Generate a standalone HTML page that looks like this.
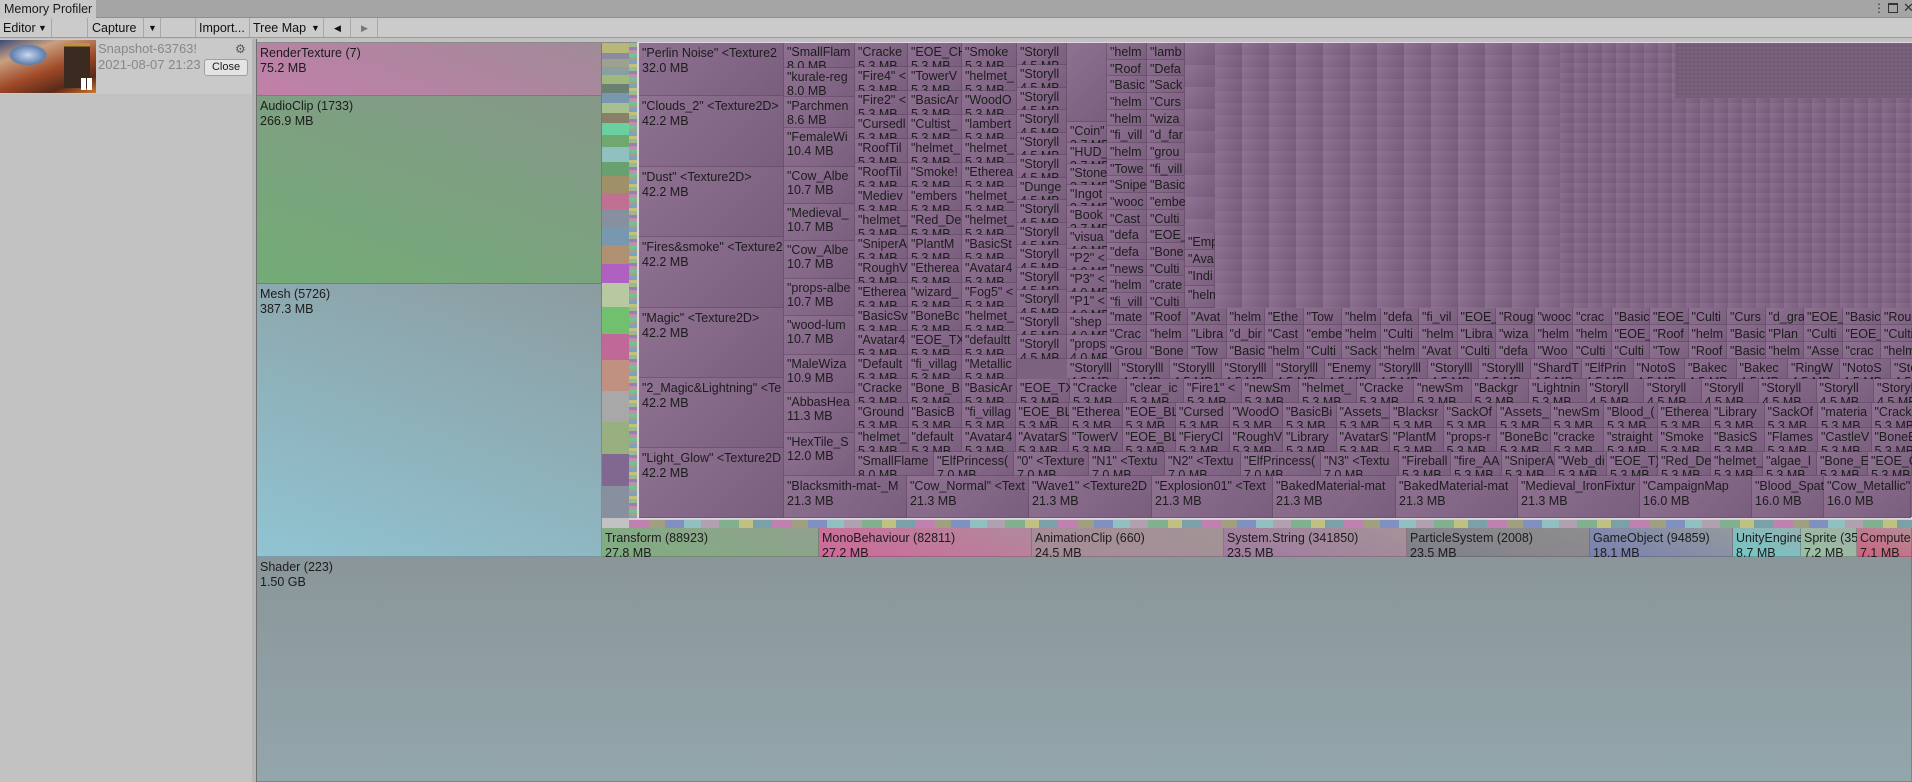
<!DOCTYPE html>
<html><head><meta charset="utf-8"><style>
*{margin:0;padding:0;box-sizing:border-box}
body{width:1912px;height:782px;overflow:hidden;background:#c2c2c2;font-family:"Liberation Sans",sans-serif;font-size:12.5px;color:#1a1a1a;position:relative}
.a{position:absolute}
.tab{left:0;top:0;width:1912px;height:18px;background:#a5a5a5;border-bottom:1px solid #8f8f8f}
.tb{left:0;top:18px;width:1912px;height:20px;background:#cbcbcb;border-bottom:1px solid #9a9a9a}
.sep{position:absolute;top:0;width:1px;height:19px;background:#a8a8a8}
.tt{position:absolute;top:3px;font-size:12.5px;color:#111}
.c{position:absolute;overflow:hidden;white-space:nowrap;padding:2px 0 0 3px;line-height:14px;font-size:12.5px;color:#1c1c1c;background:linear-gradient(135deg,#8f7292,#7a5e7e);box-shadow:inset -1px -1px 0 rgba(60,40,60,.25)}
.big{font-size:12.5px;line-height:15px;padding:3px 0 0 3px}
.strip div{position:absolute;left:0;width:27px}
</style></head><body>
<!-- tab bar -->
<div class="a tab"></div>
<div class="a" style="left:0;top:0;width:96px;height:18px;background:#c9c9c9;padding:2px 0 0 4px;font-size:12.5px">Memory Profiler</div>
<div class="a" style="left:1873px;top:1px;font-size:12px;color:#333">⋮</div>
<div class="a" style="left:1888px;top:3px;width:10px;height:10px;border:1px solid #333;border-top-width:2px"></div>
<div class="a" style="left:1903px;top:0;font-size:13px;color:#333">✕</div>
<!-- toolbar -->
<div class="a tb">
<span class="tt" style="left:3px">Editor</span><span class="tt" style="left:38px;font-size:9px;top:5px">▼</span>
<div class="sep" style="left:51px"></div><div class="sep" style="left:87px"></div>
<span class="tt" style="left:92px">Capture</span><div class="sep" style="left:143px"></div>
<span class="tt" style="left:148px;font-size:9px;top:5px">▼</span>
<div class="sep" style="left:160px"></div><div class="sep" style="left:195px"></div>
<span class="tt" style="left:199px">Import...</span><div class="sep" style="left:249px"></div>
<span class="tt" style="left:253px">Tree Map</span><span class="tt" style="left:311px;font-size:9px;top:5px">▼</span>
<div class="sep" style="left:323px"></div>
<span class="tt" style="left:334px;font-size:9px;top:5px">◀</span><div class="sep" style="left:350px"></div>
<span class="tt" style="left:361px;font-size:9px;top:5px;color:#777">▶</span><div class="sep" style="left:377px"></div>
</div>
<!-- left panel -->
<div class="a" style="left:0;top:39px;width:252px;height:55px;background:#c9c9c9"></div>
<div class="a" style="left:0;top:40px;width:96px;height:53px;background:linear-gradient(160deg,#3a4a78 0%,#c9a080 25%,#a04a28 55%,#5a2a1a 80%,#d07a30 100%)"></div>
<div class="a" style="left:8px;top:44px;width:40px;height:22px;border-radius:50%;background:radial-gradient(#c8d8f0,#6080b0 60%,transparent 70%)"></div>
<div class="a" style="left:64px;top:43px;width:26px;height:45px;background:linear-gradient(#c09040 0 8%,#3a2a20 8% 100%)"></div>
<div class="a" style="left:81px;top:78px;width:12px;height:12px;background:repeating-linear-gradient(90deg,#fff 0 5px,transparent 5px 6px)"></div>
<div class="a" style="left:98px;top:41px;color:#888;font-size:13px">Snapshot-63763!</div>
<div class="a" style="left:98px;top:57px;color:#888;font-size:13px">2021-08-07 21:23</div>
<div class="a" style="left:235px;top:42px;color:#555;font-size:12px">⚙</div>
<div class="a" style="left:204px;top:59px;width:44px;height:17px;background:#e4e4e4;border:1px solid #a0a0a0;border-radius:3px;font-size:11px;text-align:center;line-height:15px">Close</div>
<div class="a" style="left:252px;top:39px;width:4px;height:743px;background:#b5b5b5"></div>
<div class="a" style="left:256px;top:39px;width:1px;height:743px;background:#6e6e6e"></div>
<div class="a" style="left:257px;top:42px;width:1655px;height:1px;background:#8a8a8a"></div>
<!-- big categories -->
<div class="c big" style="left:257px;top:43px;width:345px;height:53px;background:linear-gradient(20deg,#c27fa9,#a08b98)">RenderTexture (7)<br>75.2 MB</div>
<div class="c big" style="left:257px;top:96px;width:345px;height:188px;background:linear-gradient(20deg,#72ac76,#869889)">AudioClip (1733)<br>266.9 MB</div>
<div class="c big" style="left:257px;top:284px;width:345px;height:273px;background:linear-gradient(20deg,#90c4d2,#8c9ca0)">Mesh (5726)<br>387.3 MB</div>
<div class="c big" style="left:257px;top:557px;width:1655px;height:225px;background:linear-gradient(180deg,#8a9699,#93a6ac)">Shader (223)<br>1.50 GB</div>
<!-- strips -->
<div class="a strip" style="left:602px;top:43px;width:27px;height:475px">
<div style="top:0;height:10px;background:#b7b77a"></div><div style="top:10px;height:6px;background:#8a8aa0"></div><div style="top:16px;height:8px;background:#a0a090"></div><div style="top:24px;height:8px;background:#8aa0a0"></div><div style="top:32px;height:9px;background:#a0b880"></div><div style="top:41px;height:9px;background:#6a8070"></div><div style="top:50px;height:10px;background:#7898b0"></div><div style="top:60px;height:10px;background:#a8c090"></div><div style="top:70px;height:10px;background:#8a8068"></div><div style="top:80px;height:12px;background:#6ad0a0"></div><div style="top:92px;height:12px;background:#70a870"></div><div style="top:104px;height:15px;background:#90c0c0"></div><div style="top:119px;height:14px;background:#68a070"></div><div style="top:133px;height:17px;background:#a09068"></div><div style="top:150px;height:16px;background:#c07090"></div><div style="top:166px;height:18px;background:#8890a0"></div><div style="top:184px;height:18px;background:#7898b0"></div><div style="top:202px;height:19px;background:#b09070"></div><div style="top:221px;height:19px;background:#b060c0"></div><div style="top:240px;height:24px;background:#b8c8a0"></div><div style="top:264px;height:27px;background:#70c070"></div><div style="top:291px;height:26px;background:#c06898"></div><div style="top:317px;height:31px;background:#c09080"></div><div style="top:348px;height:31px;background:#a8a8a8"></div><div style="top:379px;height:32px;background:#98b080"></div><div style="top:411px;height:32px;background:#806890"></div><div style="top:443px;height:32px;background:#8890a0"></div>
</div>
<div class="a" style="left:629px;top:43px;width:9px;height:475px;background:repeating-linear-gradient(180deg,#a0b890 0 4px,#9080c0 4px 7px,#c090a0 7px 10px,#70c0a0 10px 14px,#b0a070 14px 17px,#80a0c0 17px 21px,#c0c080 21px 24px)"></div>
<div class="a" style="left:629px;top:518px;width:1283px;height:10px;background:repeating-linear-gradient(90deg,#c080b0 0 20px,#a0a080 20px 36px,#8090c0 36px 55px,#90c0c0 55px 72px,#b0a0b0 72px 90px,#80b090 90px 110px,#c0c080 110px 124px,#7aa0a8 124px 143px)"></div>
<div class="a" style="left:629px;top:518px;width:1283px;height:2px;background:#d8c8d8"></div>
<!-- bottom categories -->
<div class="c big" style="left:602px;top:528px;width:217px;height:29px;background:linear-gradient(20deg,#7fae80,#92a08f)">Transform (88923)<br>27.8 MB</div>
<div class="c big" style="left:819px;top:528px;width:213px;height:29px;background:linear-gradient(20deg,#d0689a,#b08a9c)">MonoBehaviour (82811)<br>27.2 MB</div>
<div class="c big" style="left:1032px;top:528px;width:192px;height:29px;background:linear-gradient(20deg,#a88a98,#a09496)">AnimationClip (660)<br>24.5 MB</div>
<div class="c big" style="left:1224px;top:528px;width:183px;height:29px;background:linear-gradient(20deg,#a07aa0,#a59299)">System.String (341850)<br>23.5 MB</div>
<div class="c big" style="left:1407px;top:528px;width:183px;height:29px;background:linear-gradient(20deg,#7f7f88,#8e8e90)">ParticleSystem (2008)<br>23.5 MB</div>
<div class="c big" style="left:1590px;top:528px;width:143px;height:29px;background:linear-gradient(20deg,#7880b0,#949a9e)">GameObject (94859)<br>18.1 MB</div>
<div class="c big" style="left:1733px;top:528px;width:68px;height:29px;background:linear-gradient(20deg,#70c8c8,#98b0b0)">UnityEngine<br>8.7 MB</div>
<div class="c big" style="left:1801px;top:528px;width:56px;height:29px;background:linear-gradient(20deg,#98c0a0,#a0b0a8)">Sprite (35<br>7.2 MB</div>
<div class="c big" style="left:1857px;top:528px;width:55px;height:29px;background:linear-gradient(20deg,#d06080,#b09098)">Compute<br>7.1 MB</div>
<!-- texture box -->
<div class="a" style="left:637px;top:42px;width:1275px;height:477px;background:#e0d6e0"></div>
<div class="a" style="left:639px;top:43px;width:1273px;height:474px;background:#7d627f"></div>
<!-- pattern area -->
<div class="a" style="left:1215px;top:43px;width:697px;height:265px;background:linear-gradient(135deg,#917495,#765a79);background-size:27px 12px"></div>
<div class="a" style="left:1560px;top:43px;width:352px;height:265px;background:linear-gradient(135deg,#8d7090,#755a78);background-size:14px 10px"></div>
<div class="a" style="left:1675px;top:43px;width:237px;height:55px;background:linear-gradient(135deg,#7f6682,#6d5570);background-size:4px 4px"></div>
<div class="a" style="left:1185px;top:43px;width:30px;height:190px;background:linear-gradient(135deg,#917495,#765a79);background-size:30px 22px"></div>
<!-- col1 -->
<div class="c big" style="left:639px;top:43px;width:145px;height:53px">"Perlin Noise" &lt;Texture2<br>32.0 MB</div>
<div class="c big" style="left:639px;top:96px;width:145px;height:71px">"Clouds_2" &lt;Texture2D&gt;<br>42.2 MB</div>
<div class="c big" style="left:639px;top:167px;width:145px;height:70px">"Dust" &lt;Texture2D&gt;<br>42.2 MB</div>
<div class="c big" style="left:639px;top:237px;width:145px;height:71px">"Fires&amp;smoke" &lt;Texture2<br>42.2 MB</div>
<div class="c big" style="left:639px;top:308px;width:145px;height:70px">"Magic" &lt;Texture2D&gt;<br>42.2 MB</div>
<div class="c big" style="left:639px;top:378px;width:145px;height:70px">"2_Magic&amp;Lightning" &lt;Te<br>42.2 MB</div>
<div class="c big" style="left:639px;top:448px;width:145px;height:70px">"Light_Glow" &lt;Texture2D<br>42.2 MB</div>
<!-- col2 -->
<div class="c" style="left:784px;top:43px;width:71px;height:25px">"SmallFlam<br>8.0 MB</div>
<div class="c" style="left:784px;top:68px;width:71px;height:29px">"kurale-reg<br>8.0 MB</div>
<div class="c" style="left:784px;top:97px;width:71px;height:31px">"Parchmen<br>8.6 MB</div>
<div class="c" style="left:784px;top:128px;width:71px;height:39px">"FemaleWi<br>10.4 MB</div>
<div class="c" style="left:784px;top:167px;width:71px;height:37px">"Cow_Albe<br>10.7 MB</div>
<div class="c" style="left:784px;top:204px;width:71px;height:37px">"Medieval_<br>10.7 MB</div>
<div class="c" style="left:784px;top:241px;width:71px;height:38px">"Cow_Albe<br>10.7 MB</div>
<div class="c" style="left:784px;top:279px;width:71px;height:37px">"props-albe<br>10.7 MB</div>
<div class="c" style="left:784px;top:316px;width:71px;height:39px">"wood-lum<br>10.7 MB</div>
<div class="c" style="left:784px;top:355px;width:71px;height:38px">"MaleWiza<br>10.9 MB</div>
<div class="c" style="left:784px;top:393px;width:71px;height:40px">"AbbasHea<br>11.3 MB</div>
<div class="c" style="left:784px;top:433px;width:71px;height:43px">"HexTile_S<br>12.0 MB</div>
<!-- cols A B C -->
<div class="c" style="left:855px;top:43px;width:53px;height:24px">"Cracke<br>5.3 MB</div><div class="c" style="left:908px;top:43px;width:54px;height:24px">"EOE_CH<br>5.3 MB</div><div class="c" style="left:962px;top:43px;width:55px;height:24px">"Smoke<br>5.3 MB</div>
<div class="c" style="left:855px;top:67px;width:53px;height:24px">"Fire4" &lt;<br>5.3 MB</div><div class="c" style="left:908px;top:67px;width:54px;height:24px">"TowerV<br>5.3 MB</div><div class="c" style="left:962px;top:67px;width:55px;height:24px">"helmet_<br>5.3 MB</div>
<div class="c" style="left:855px;top:91px;width:53px;height:24px">"Fire2" &lt;<br>5.3 MB</div><div class="c" style="left:908px;top:91px;width:54px;height:24px">"BasicAr<br>5.3 MB</div><div class="c" style="left:962px;top:91px;width:55px;height:24px">"WoodO<br>5.3 MB</div>
<div class="c" style="left:855px;top:115px;width:53px;height:24px">"Cursedl<br>5.3 MB</div><div class="c" style="left:908px;top:115px;width:54px;height:24px">"Cultist_<br>5.3 MB</div><div class="c" style="left:962px;top:115px;width:55px;height:24px">"lambert<br>5.3 MB</div>
<div class="c" style="left:855px;top:139px;width:53px;height:24px">"RoofTil<br>5.3 MB</div><div class="c" style="left:908px;top:139px;width:54px;height:24px">"helmet_<br>5.3 MB</div><div class="c" style="left:962px;top:139px;width:55px;height:24px">"helmet_<br>5.3 MB</div>
<div class="c" style="left:855px;top:163px;width:53px;height:24px">"RoofTil<br>5.3 MB</div><div class="c" style="left:908px;top:163px;width:54px;height:24px">"Smoke!<br>5.3 MB</div><div class="c" style="left:962px;top:163px;width:55px;height:24px">"Etherea<br>5.3 MB</div>
<div class="c" style="left:855px;top:187px;width:53px;height:24px">"Mediev<br>5.3 MB</div><div class="c" style="left:908px;top:187px;width:54px;height:24px">"embers<br>5.3 MB</div><div class="c" style="left:962px;top:187px;width:55px;height:24px">"helmet_<br>5.3 MB</div>
<div class="c" style="left:855px;top:211px;width:53px;height:24px">"helmet_<br>5.3 MB</div><div class="c" style="left:908px;top:211px;width:54px;height:24px">"Red_De<br>5.3 MB</div><div class="c" style="left:962px;top:211px;width:55px;height:24px">"helmet_<br>5.3 MB</div>
<div class="c" style="left:855px;top:235px;width:53px;height:24px">"SniperA<br>5.3 MB</div><div class="c" style="left:908px;top:235px;width:54px;height:24px">"PlantM<br>5.3 MB</div><div class="c" style="left:962px;top:235px;width:55px;height:24px">"BasicSt<br>5.3 MB</div>
<div class="c" style="left:855px;top:259px;width:53px;height:24px">"RoughV<br>5.3 MB</div><div class="c" style="left:908px;top:259px;width:54px;height:24px">"Etherea<br>5.3 MB</div><div class="c" style="left:962px;top:259px;width:55px;height:24px">"Avatar4<br>5.3 MB</div>
<div class="c" style="left:855px;top:283px;width:53px;height:24px">"Etherea<br>5.3 MB</div><div class="c" style="left:908px;top:283px;width:54px;height:24px">"wizard_<br>5.3 MB</div><div class="c" style="left:962px;top:283px;width:55px;height:24px">"Fog5" &lt;<br>5.3 MB</div>
<div class="c" style="left:855px;top:307px;width:53px;height:24px">"BasicSv<br>5.3 MB</div><div class="c" style="left:908px;top:307px;width:54px;height:24px">"BoneBc<br>5.3 MB</div><div class="c" style="left:962px;top:307px;width:55px;height:24px">"helmet_<br>5.3 MB</div>
<div class="c" style="left:855px;top:331px;width:53px;height:24px">"Avatar4<br>5.3 MB</div><div class="c" style="left:908px;top:331px;width:54px;height:24px">"EOE_TX<br>5.3 MB</div><div class="c" style="left:962px;top:331px;width:55px;height:24px">"defaultt<br>5.3 MB</div>
<div class="c" style="left:855px;top:355px;width:53px;height:24px">"Default<br>5.3 MB</div><div class="c" style="left:908px;top:355px;width:54px;height:24px">"fi_villag<br>5.3 MB</div><div class="c" style="left:962px;top:355px;width:55px;height:24px">"Metallic<br>5.3 MB</div>
<!-- col D Storyll -->
<div class="c" style="left:1017px;top:43px;width:50px;height:22px">"Storyll<br>4.5 MB</div>
<div class="c" style="left:1017px;top:65px;width:50px;height:23px">"Storyll<br>4.5 MB</div>
<div class="c" style="left:1017px;top:88px;width:50px;height:22px">"Storyll<br>4.5 MB</div>
<div class="c" style="left:1017px;top:110px;width:50px;height:23px">"Storyll<br>4.5 MB</div>
<div class="c" style="left:1017px;top:133px;width:50px;height:22px">"Storyll<br>4.5 MB</div>
<div class="c" style="left:1017px;top:155px;width:50px;height:23px">"Storyll<br>4.5 MB</div>
<div class="c" style="left:1017px;top:178px;width:50px;height:22px">"Dunge<br>4.5 MB</div>
<div class="c" style="left:1017px;top:200px;width:50px;height:23px">"Storyll<br>4.5 MB</div>
<div class="c" style="left:1017px;top:223px;width:50px;height:22px">"Storyll<br>4.5 MB</div>
<div class="c" style="left:1017px;top:245px;width:50px;height:23px">"Storyll<br>4.5 MB</div>
<div class="c" style="left:1017px;top:268px;width:50px;height:22px">"Storyll<br>4.5 MB</div>
<div class="c" style="left:1017px;top:290px;width:50px;height:23px">"Storyll<br>4.5 MB</div>
<div class="c" style="left:1017px;top:313px;width:50px;height:22px">"Storyll<br>4.5 MB</div>
<div class="c" style="left:1017px;top:335px;width:50px;height:24px">"Storyll<br>4.5 MB</div>
<!-- col E -->
<div class="c" style="left:1067px;top:43px;width:40px;height:79px"></div>
<div class="c" style="left:1067px;top:122px;width:40px;height:21px">"Coin"<br>3.7 MB</div>
<div class="c" style="left:1067px;top:143px;width:40px;height:21px">"HUD_<br>3.7 MB</div>
<div class="c" style="left:1067px;top:164px;width:40px;height:21px">"Stone<br>3.7 MB</div>
<div class="c" style="left:1067px;top:185px;width:40px;height:21px">"Ingot<br>3.7 MB</div>
<div class="c" style="left:1067px;top:206px;width:40px;height:22px">"Book<br>3.7 MB</div>
<div class="c" style="left:1067px;top:228px;width:40px;height:21px">"visua<br>4.0 MB</div>
<div class="c" style="left:1067px;top:249px;width:40px;height:21px">"P2" &lt;<br>4.0 MB</div>
<div class="c" style="left:1067px;top:270px;width:40px;height:22px">"P3" &lt;<br>4.0 MB</div>
<div class="c" style="left:1067px;top:292px;width:40px;height:21px">"P1" &lt;<br>4.0 MB</div>
<div class="c" style="left:1067px;top:313px;width:40px;height:22px">"shep<br>4.0 MB</div>
<div class="c" style="left:1067px;top:335px;width:40px;height:24px">"props<br>4.0 MB</div>
<!-- col F / G -->
<div class="c" style="left:1107px;top:43px;width:40px;height:17px">"helm</div><div class="c" style="left:1147px;top:43px;width:38px;height:17px">"lamb</div>
<div class="c" style="left:1107px;top:60px;width:40px;height:16px">"Roof</div><div class="c" style="left:1147px;top:60px;width:38px;height:16px">"Defa</div>
<div class="c" style="left:1107px;top:76px;width:40px;height:17px">"Basic</div><div class="c" style="left:1147px;top:76px;width:38px;height:17px">"Sack</div>
<div class="c" style="left:1107px;top:93px;width:40px;height:17px">"helm</div><div class="c" style="left:1147px;top:93px;width:38px;height:17px">"Curs</div>
<div class="c" style="left:1107px;top:110px;width:40px;height:16px">"helm</div><div class="c" style="left:1147px;top:110px;width:38px;height:16px">"wiza</div>
<div class="c" style="left:1107px;top:126px;width:40px;height:17px">"fi_vill</div><div class="c" style="left:1147px;top:126px;width:38px;height:17px">"d_far</div>
<div class="c" style="left:1107px;top:143px;width:40px;height:17px">"helm</div><div class="c" style="left:1147px;top:143px;width:38px;height:17px">"grou</div>
<div class="c" style="left:1107px;top:160px;width:40px;height:16px">"Towe</div><div class="c" style="left:1147px;top:160px;width:38px;height:16px">"fi_vill</div>
<div class="c" style="left:1107px;top:176px;width:40px;height:17px">"Snipe</div><div class="c" style="left:1147px;top:176px;width:38px;height:17px">"Basic</div>
<div class="c" style="left:1107px;top:193px;width:40px;height:17px">"wooc</div><div class="c" style="left:1147px;top:193px;width:38px;height:17px">"embe</div>
<div class="c" style="left:1107px;top:210px;width:40px;height:16px">"Cast</div><div class="c" style="left:1147px;top:210px;width:38px;height:16px">"Culti</div>
<div class="c" style="left:1107px;top:226px;width:40px;height:17px">"defa</div><div class="c" style="left:1147px;top:226px;width:38px;height:17px">"EOE_</div>
<div class="c" style="left:1107px;top:243px;width:40px;height:17px">"defa</div><div class="c" style="left:1147px;top:243px;width:38px;height:17px">"Bone</div>
<div class="c" style="left:1107px;top:260px;width:40px;height:16px">"news</div><div class="c" style="left:1147px;top:260px;width:38px;height:16px">"Culti</div>
<div class="c" style="left:1107px;top:276px;width:40px;height:17px">"helm</div><div class="c" style="left:1147px;top:276px;width:38px;height:17px">"crate</div>
<div class="c" style="left:1107px;top:293px;width:40px;height:15px">"fi_vill</div><div class="c" style="left:1147px;top:293px;width:38px;height:15px">"Culti</div>
<div class="c" style="left:1185px;top:233px;width:30px;height:17px">"Emp</div>
<div class="c" style="left:1185px;top:250px;width:30px;height:17px">"Ava</div>
<div class="c" style="left:1185px;top:267px;width:30px;height:19px">"Indi</div>
<div class="c" style="left:1185px;top:286px;width:30px;height:22px">"helm</div>
<!-- rows 308/325/342 -->
<div class="a" style="left:1107px;top:308px;width:805px;height:51px">
<div class="c" style="left:0;top:0;width:40px;height:17px">"mate</div><div class="c" style="left:0;top:17px;width:40px;height:17px">"Crac</div><div class="c" style="left:0;top:34px;width:40px;height:17px">"Grou</div>
<div class="c" style="left:40px;top:0;width:41px;height:17px">"Roof</div><div class="c" style="left:40px;top:17px;width:41px;height:17px">"helm</div><div class="c" style="left:40px;top:34px;width:41px;height:17px">"Bone</div>
</div>
<div class="a" style="left:1188px;top:308px;width:724px;height:51px;display:grid;grid-template-columns:repeat(19,38.5px);grid-auto-rows:17px">
<div class="c" style="position:relative">"Avat</div><div class="c" style="position:relative">"helm</div><div class="c" style="position:relative">"Ethe</div><div class="c" style="position:relative">"Tow</div><div class="c" style="position:relative">"helm</div><div class="c" style="position:relative">"defa</div><div class="c" style="position:relative">"fi_vil</div><div class="c" style="position:relative">"EOE_</div><div class="c" style="position:relative">"Roug</div><div class="c" style="position:relative">"wooc</div><div class="c" style="position:relative">"crac</div><div class="c" style="position:relative">"Basic</div><div class="c" style="position:relative">"EOE_</div><div class="c" style="position:relative">"Culti</div><div class="c" style="position:relative">"Curs</div><div class="c" style="position:relative">"d_gra</div><div class="c" style="position:relative">"EOE_</div><div class="c" style="position:relative">"Basic</div><div class="c" style="position:relative">"Roug</div>
<div class="c" style="position:relative">"Libra</div><div class="c" style="position:relative">"d_bir</div><div class="c" style="position:relative">"Cast</div><div class="c" style="position:relative">"embe</div><div class="c" style="position:relative">"helm</div><div class="c" style="position:relative">"Culti</div><div class="c" style="position:relative">"helm</div><div class="c" style="position:relative">"Libra</div><div class="c" style="position:relative">"wiza</div><div class="c" style="position:relative">"helm</div><div class="c" style="position:relative">"helm</div><div class="c" style="position:relative">"EOE_</div><div class="c" style="position:relative">"Roof</div><div class="c" style="position:relative">"helm</div><div class="c" style="position:relative">"Basic</div><div class="c" style="position:relative">"Plan</div><div class="c" style="position:relative">"Culti</div><div class="c" style="position:relative">"EOE_</div><div class="c" style="position:relative">"Culti</div>
<div class="c" style="position:relative">"Tow</div><div class="c" style="position:relative">"Basic</div><div class="c" style="position:relative">"helm</div><div class="c" style="position:relative">"Culti</div><div class="c" style="position:relative">"Sack</div><div class="c" style="position:relative">"helm</div><div class="c" style="position:relative">"Avat</div><div class="c" style="position:relative">"Culti</div><div class="c" style="position:relative">"defa</div><div class="c" style="position:relative">"Woo</div><div class="c" style="position:relative">"Culti</div><div class="c" style="position:relative">"Culti</div><div class="c" style="position:relative">"Tow</div><div class="c" style="position:relative">"Roof</div><div class="c" style="position:relative">"Basic</div><div class="c" style="position:relative">"helm</div><div class="c" style="position:relative">"Asse</div><div class="c" style="position:relative">"crac</div><div class="c" style="position:relative">"helm</div>
</div>
<!-- Storyll row 359 -->
<div class="a" style="left:1067px;top:359px;width:845px;height:20px;display:grid;grid-template-columns:repeat(17,51.5px);grid-auto-rows:20px">
<div class="c" style="position:relative">"Storylll<br>4.5 MB</div><div class="c" style="position:relative">"Storylll<br>4.5 MB</div><div class="c" style="position:relative">"Storylll<br>4.5 MB</div><div class="c" style="position:relative">"Storylll<br>4.5 MB</div><div class="c" style="position:relative">"Storylll<br>4.5 MB</div><div class="c" style="position:relative">"Enemy<br>4.5 MB</div><div class="c" style="position:relative">"Storylll<br>4.5 MB</div><div class="c" style="position:relative">"Storylll<br>4.5 MB</div><div class="c" style="position:relative">"Storylll<br>4.5 MB</div><div class="c" style="position:relative">"ShardT<br>4.5 MB</div><div class="c" style="position:relative">"ElfPrin<br>4.5 MB</div><div class="c" style="position:relative">"NotoS<br>4.5 MB</div><div class="c" style="position:relative">"Bakec<br>4.5 MB</div><div class="c" style="position:relative">"Bakec<br>4.5 MB</div><div class="c" style="position:relative">"RingW<br>4.5 MB</div><div class="c" style="position:relative">"NotoS<br>4.5 MB</div><div class="c" style="position:relative">"Storylll<br>4.5 MB</div>
</div>
<!-- row 379 -->
<div class="a" style="left:855px;top:379px;width:1057px;height:24px;display:grid;grid-template-columns:53px 54px 55px 53px 57px 57px repeat(13,57.5px);grid-auto-rows:24px">
<div class="c" style="position:relative">"Cracke<br>5.3 MB</div><div class="c" style="position:relative">"Bone_B<br>5.3 MB</div><div class="c" style="position:relative">"BasicAr<br>5.3 MB</div><div class="c" style="position:relative">"EOE_TX<br>5.3 MB</div><div class="c" style="position:relative">"Cracke<br>5.3 MB</div><div class="c" style="position:relative">"clear_ic<br>5.3 MB</div><div class="c" style="position:relative">"Fire1" &lt;<br>5.3 MB</div><div class="c" style="position:relative">"newSm<br>5.3 MB</div><div class="c" style="position:relative">"helmet_<br>5.3 MB</div><div class="c" style="position:relative">"Cracke<br>5.3 MB</div><div class="c" style="position:relative">"newSm<br>5.3 MB</div><div class="c" style="position:relative">"Backgr<br>5.3 MB</div><div class="c" style="position:relative">"Lightnin<br>5.3 MB</div><div class="c" style="position:relative">"Storyll<br>4.5 MB</div><div class="c" style="position:relative">"Storyll<br>4.5 MB</div><div class="c" style="position:relative">"Storyll<br>4.5 MB</div><div class="c" style="position:relative">"Storyll<br>4.5 MB</div><div class="c" style="position:relative">"Storyll<br>4.5 MB</div><div class="c" style="position:relative">"Storyll<br>4.5 MB</div>
</div>
<!-- rows 403/427 -->
<div class="a" style="left:855px;top:403px;width:1057px;height:49px;display:grid;grid-template-columns:repeat(20,53.5px);grid-auto-rows:24.5px">
<div class="c" style="position:relative">"Ground<br>5.3 MB</div><div class="c" style="position:relative">"BasicB<br>5.3 MB</div><div class="c" style="position:relative">"fi_villag<br>5.3 MB</div><div class="c" style="position:relative">"EOE_BL<br>5.3 MB</div><div class="c" style="position:relative">"Etherea<br>5.3 MB</div><div class="c" style="position:relative">"EOE_BL<br>5.3 MB</div><div class="c" style="position:relative">"Cursed<br>5.3 MB</div><div class="c" style="position:relative">"WoodO<br>5.3 MB</div><div class="c" style="position:relative">"BasicBi<br>5.3 MB</div><div class="c" style="position:relative">"Assets_<br>5.3 MB</div><div class="c" style="position:relative">"Blacksr<br>5.3 MB</div><div class="c" style="position:relative">"SackOf<br>5.3 MB</div><div class="c" style="position:relative">"Assets_<br>5.3 MB</div><div class="c" style="position:relative">"newSm<br>5.3 MB</div><div class="c" style="position:relative">"Blood_(<br>5.3 MB</div><div class="c" style="position:relative">"Etherea<br>5.3 MB</div><div class="c" style="position:relative">"Library<br>5.3 MB</div><div class="c" style="position:relative">"SackOf<br>5.3 MB</div><div class="c" style="position:relative">"materia<br>5.3 MB</div><div class="c" style="position:relative">"Cracke<br>5.3 MB</div>
<div class="c" style="position:relative">"helmet_<br>5.3 MB</div><div class="c" style="position:relative">"default<br>5.3 MB</div><div class="c" style="position:relative">"Avatar4<br>5.3 MB</div><div class="c" style="position:relative">"AvatarS<br>5.3 MB</div><div class="c" style="position:relative">"TowerV<br>5.3 MB</div><div class="c" style="position:relative">"EOE_BL<br>5.3 MB</div><div class="c" style="position:relative">"FieryCl<br>5.3 MB</div><div class="c" style="position:relative">"RoughV<br>5.3 MB</div><div class="c" style="position:relative">"Library<br>5.3 MB</div><div class="c" style="position:relative">"AvatarS<br>5.3 MB</div><div class="c" style="position:relative">"PlantM<br>5.3 MB</div><div class="c" style="position:relative">"props-r<br>5.3 MB</div><div class="c" style="position:relative">"BoneBc<br>5.3 MB</div><div class="c" style="position:relative">"cracke<br>5.3 MB</div><div class="c" style="position:relative">"straight<br>5.3 MB</div><div class="c" style="position:relative">"Smoke<br>5.3 MB</div><div class="c" style="position:relative">"BasicS<br>5.3 MB</div><div class="c" style="position:relative">"Flames<br>5.3 MB</div><div class="c" style="position:relative">"CastleV<br>5.3 MB</div><div class="c" style="position:relative">"BoneBc<br>5.3 MB</div>
</div>
<!-- row 452 -->
<div class="a" style="left:855px;top:452px;width:1057px;height:24px;display:grid;grid-template-columns:79px 80px 75px 76px 76px 80px 78px 52px 51px 53px 52px 51px 53px 52px 54px 51px 44px;grid-auto-rows:24px">
<div class="c" style="position:relative">"SmallFlame<br>8.0 MB</div><div class="c" style="position:relative">"ElfPrincess(<br>7.0 MB</div><div class="c" style="position:relative">"0" &lt;Texture<br>7.0 MB</div><div class="c" style="position:relative">"N1" &lt;Textu<br>7.0 MB</div><div class="c" style="position:relative">"N2" &lt;Textu<br>7.0 MB</div><div class="c" style="position:relative">"ElfPrincess(<br>7.0 MB</div><div class="c" style="position:relative">"N3" &lt;Textu<br>7.0 MB</div><div class="c" style="position:relative">"Fireball<br>5.3 MB</div><div class="c" style="position:relative">"fire_AA<br>5.3 MB</div><div class="c" style="position:relative">"SniperA<br>5.3 MB</div><div class="c" style="position:relative">"Web_di<br>5.3 MB</div><div class="c" style="position:relative">"EOE_T)<br>5.3 MB</div><div class="c" style="position:relative">"Red_De<br>5.3 MB</div><div class="c" style="position:relative">"helmet_<br>5.3 MB</div><div class="c" style="position:relative">"algae_l<br>5.3 MB</div><div class="c" style="position:relative">"Bone_E<br>5.3 MB</div><div class="c" style="position:relative">"EOE_CH<br>5.3 MB</div>
</div>
<!-- bottom row 476 -->
<div class="a" style="left:784px;top:476px;width:1128px;height:42px;display:grid;grid-template-columns:123px 122px 123px 121px 123px 122px 122px 112px 72px 87px;grid-auto-rows:42px">
<div class="c big" style="position:relative">"Blacksmith-mat-_M<br>21.3 MB</div><div class="c big" style="position:relative">"Cow_Normal" &lt;Text<br>21.3 MB</div><div class="c big" style="position:relative">"Wave1" &lt;Texture2D<br>21.3 MB</div><div class="c big" style="position:relative">"Explosion01" &lt;Text<br>21.3 MB</div><div class="c big" style="position:relative">"BakedMaterial-mat<br>21.3 MB</div><div class="c big" style="position:relative">"BakedMaterial-mat<br>21.3 MB</div><div class="c big" style="position:relative">"Medieval_IronFixtur<br>21.3 MB</div><div class="c big" style="position:relative">"CampaignMap<br>16.0 MB</div><div class="c big" style="position:relative">"Blood_Spatter<br>16.0 MB</div><div class="c big" style="position:relative">"Cow_Metallic"<br>16.0 MB</div>
</div>
</body></html>
